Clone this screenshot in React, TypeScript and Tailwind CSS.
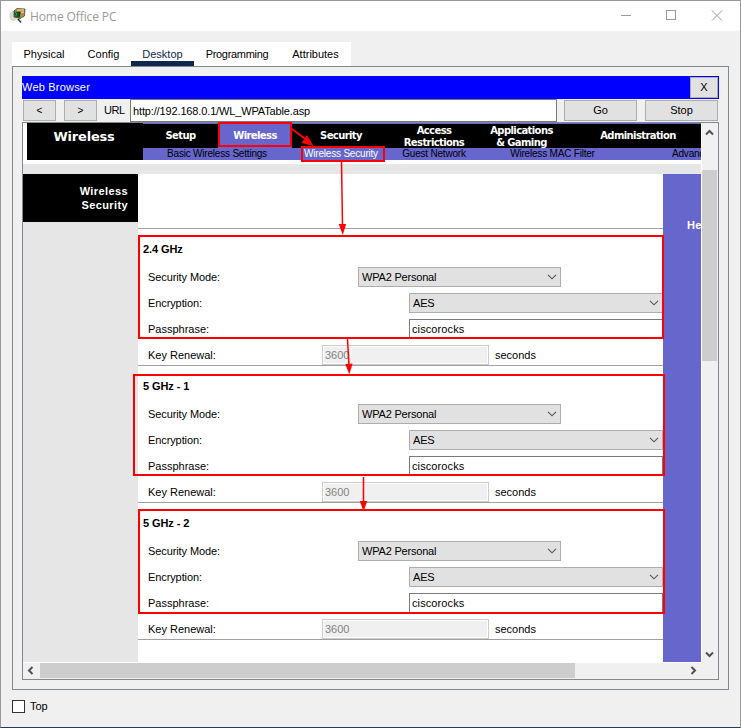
import type { ReactNode } from "react";

const tabs = [
  { label: "Physical", style: "w-16" },
  { label: "Config", style: "w-[55px]" },
  { label: "Desktop", style: "w-[63px] border-b-[5px] border-[#0d274d] text-[#0d274d] pt-[5px]" },
  { label: "Programming", style: "w-[86px] tracking-[-0.3px]" },
  { label: "Attributes", style: "w-[71px]" },
];

const menu = [
  { label: "Setup", style: "w-[75px]" },
  { label: "Wireless", style: "w-[74px] bg-[#6666cc]" },
  { label: "Security", style: "w-[98px]" },
  { label: "Access Restrictions", style: "w-[88px] px-2 pt-[2px]" },
  { label: "Applications & Gaming", style: "w-[87px] px-3 pt-[2px]" },
  { label: "Administration", style: "w-[146px]" },
];

const submenu = [
  { label: "Basic Wireless Settings", style: "w-[148px] text-center" },
  { label: "Wireless Security", style: "w-[100px] text-center text-white" },
  { label: "Guest Network", style: "w-[86px] text-center" },
  { label: "Wireless MAC Filter", style: "w-[151px] text-center" },
  { label: "Advanced Wireless Settings", style: "w-[200px] pl-11" },
];

const bands = ["2.4 GHz", "5 GHz - 1", "5 GHz - 2"];

function Button({ children, className }: { children: ReactNode; className: string }) {
  return (
    <button className={`h-[21px] shrink-0 border border-[#adadad] bg-[#e1e1e1] flex items-center justify-center ${className}`}>
      {children}
    </button>
  );
}

function Select({ value, className }: { value: string; className: string }) {
  return (
    <div className={`h-5 border border-[#adadad] bg-[#e1e1e1] flex items-center justify-between pl-[3px] pr-[3px] ${className}`}>
      <span className="tracking-[-0.2px]">{value}</span>
      <svg width="10" height="6" viewBox="0 0 10 6" fill="none" stroke="#555" strokeWidth="1.1">
        <path d="M1 .8 5 4.8 9 .8" />
      </svg>
    </div>
  );
}

function Band({ name }: { name: string }) {
  return (
    <section className="h-[137px] border-b border-[#a0a0a0] pl-[10px]">
      <h2 className="h-[35px] pt-[12px] -ml-[5px] font-bold leading-4 tracking-[-0.1px]">{name}</h2>
      <div className="flex h-[26px] items-center">
        <label className="w-[210px] tracking-[-0.1px]">Security Mode:</label>
        <Select value="WPA2 Personal" className="w-[203px]" />
      </div>
      <div className="flex h-[26px] items-center">
        <label className="w-[261px] tracking-[-0.1px]">Encryption:</label>
        <Select value="AES" className="w-[254px]" />
      </div>
      <div className="flex h-[26px] items-center">
        <label className="w-[261px]">Passphrase:</label>
        <div className="h-5 w-[254px] border border-[#7a7a7a] bg-white pl-[2px] leading-[18px] tracking-[0.1px]">ciscorocks</div>
      </div>
      <div className="flex h-[26px] items-center">
        <label className="w-[174px]">Key Renewal:</label>
        <div className="h-5 w-[167px] border border-[#ccc] bg-white p-px">
          <div className="h-4 bg-[#f0f0f0] pl-px leading-4 text-[#838383]">3600</div>
        </div>
        <span className="ml-[6px]">seconds</span>
      </div>
    </section>
  );
}

function Chevron({ className }: { className: string }) {
  return (
    <svg width="9" height="7" viewBox="0 0 9 7" fill="none" stroke="#505050" strokeWidth="2" className={className}>
      <path d="M1 5.5 4.5 2 8 5.5" />
    </svg>
  );
}

function Annotations() {
  return (
    <svg className="absolute -left-px -top-px" width="741" height="728" fill="none" stroke="#f00">
      <g strokeWidth="2">
        <rect x="219" y="123" width="72" height="23" />
        <rect x="302" y="147" width="82" height="14" />
        <rect x="139" y="236" width="524" height="102" />
        <rect x="134" y="375" width="530" height="100" />
        <rect x="139" y="510" width="525" height="103" />
        <path d="M292 129 306 139.5" />
      </g>
      <g strokeWidth="1.5">
        <path d="M341.5 162 342.5 226M347.5 339 349 366M363.5 477V503" />
      </g>
      <g fill="#f00" stroke="none">
        <path d="M313.5 146 301.500 143 307 135Z" />
        <path d="M342.700 235 338.800 224H346.200Z" />
        <path d="M349.300 374.500 345.300 364 352.600 363.500Z" />
        <path d="M363.500 511.500 359.800 501H367.200Z" />
      </g>
      {/* dark patches of the desktop along the window frame */}
      <path d="M.5 117V149M.5 696V728M740.5 84V91M740.5 103V106M740.5 500V509M740.5 515V528" stroke="#2b3a4f" />
    </svg>
  );
}

export default function App() {
  return (
    <div className="relative h-[728px] w-[741px] overflow-hidden border border-t-[#999] border-x-[#999] border-b-[#2b3a4f] bg-[#f0f0f0] font-['Liberation_Sans',Arial,sans-serif] text-[11px] leading-[13px] text-black">
      <header className="flex h-[30px] items-center bg-white pl-2">
        <svg width="18" height="18" viewBox="0 0 18 18">
          <ellipse cx="4.5" cy="9" rx="4.2" ry="5" fill="#d5d8d5" />
          <path d="M5 4 8 1.500 16 2 15.500 9 11 11.500 5 10Z" fill="#b08d4e" stroke="#3a3520" strokeWidth=".7" />
          <path d="M8 3 15 3M12 5.500 15 5" stroke="#e6c478" strokeWidth="1.300" />
          <path d="M5 4.500 11.500 5 10.500 11 5.500 9.500Z" fill="#0d5c1a" />
          <path d="M6 5 8 7 6.500 9" stroke="#3aa547" fill="none" />
          <path d="M9 5 11.500 5 10.500 11" fill="#17331b" />
          <path d="M9 12 12 15.500" stroke="#333" strokeWidth="1.500" />
          <path d="M8 12 9 13" stroke="#999" />
        </svg>
        <h1 className="ml-[3px] whitespace-nowrap font-['Open_Sans','Noto_Sans',sans-serif] text-[12px] tracking-[-0.1px] text-[#999]">Home Office PC</h1>
        <div className="ml-auto flex items-center pr-[17px]">
          <svg width="102" height="12" viewBox="0 0 102 12" fill="none" stroke="#999">
            <path d="M0 5.500H10M91 .5 101 10.500M101 .5 91 10.500" />
            <rect x="45.500" y=".5" width="9" height="9" />
          </svg>
        </div>
      </header>

      <div className="mt-[11px] ml-[11px] flex h-6 w-[339px] bg-white">
        {tabs.map((tab) => (
          <div key={tab.label} className={`flex items-center justify-center ${tab.style}`}>{tab.label}</div>
        ))}
      </div>

      <main className="ml-[11px] h-[624px] w-[717px] border border-[#828790] px-[9px] pt-[9px]">
        <div className="flex h-[23px] w-[697px] items-center justify-between bg-[#0000ff] pr-px text-white">
          <span className="tracking-[0.2px]">Web Browser</span>
          <Button className="w-7 text-black">X</Button>
        </div>
        <div className="flex h-[23px] w-[697px] items-center pl-px">
          <Button className="w-[33px] text-[10px]">&lt;</Button>
          <Button className="ml-2 w-[33px] text-[10px]">&gt;</Button>
          <span className="ml-[7px] w-[26px] tracking-[-0.5px]">URL</span>
          <div className="h-[23px] w-[427px] border border-[#7a7a7a] bg-white pl-[2px] leading-[22px] tracking-[-0.14px]">http://192.168.0.1/WL_WPATable.asp</div>
          <Button className="ml-[7px] w-[73px]">Go</Button>
          <Button className="ml-2 w-[73px]">Stop</Button>
        </div>

        <div className="flex h-[558px] w-[697px] flex-col border border-[#828790] bg-[#f0f0f0]">
          <div className="flex h-[540px]">
            <div className="h-[540px] w-[679px] overflow-hidden border-r border-b border-white bg-white">
              <div className="flex h-[37px] pl-1">
                <div className="w-[116px] shrink-0 bg-black pt-[6px] pr-[2px] text-center font-['DejaVu_Sans',Verdana,sans-serif] text-[13px] font-bold leading-4 tracking-[-0.2px] text-white">Wireless</div>
                <div className="w-[558px] shrink-0 overflow-hidden border-t border-[#6666cc] bg-[#6666cc]">
                  <nav className="flex h-6 w-[568px] bg-black font-['DejaVu_Sans',Verdana,sans-serif] text-[10px] font-bold leading-3 tracking-[-0.6px] text-white">
                    {menu.map((item) => (
                      <div key={item.label} className={`flex shrink-0 items-center justify-center text-center ${item.style}`}>{item.label}</div>
                    ))}
                  </nav>
                  <nav className="flex h-3 w-[685px] text-[10px] leading-3 tracking-[-0.2px]">
                    {submenu.map((item) => (
                      <div key={item.label} className={`shrink-0 whitespace-nowrap ${item.style}`}>{item.label}</div>
                    ))}
                  </nav>
                </div>
              </div>
              <div className="mt-1 h-[10px] bg-[#e6e6e6]" />
              <div className="flex h-[488px]">
                <aside className="w-[115px] shrink-0 bg-[#e6e6e6]">
                  <div className="h-12 bg-black pt-[10px] pr-[10px] text-right font-bold leading-[14px] tracking-[0.4px] text-white">
                    Wireless<br />Security
                  </div>
                </aside>
                <div className="w-[525px] shrink-0">
                  <div className="h-[55px] border-b border-[#a0a0a0]" />
                  {bands.map((name) => <Band key={name} name={name} />)}
                </div>
                <aside className="w-[38px] shrink-0 overflow-hidden bg-[#6666cc] pt-11 pl-6 font-bold leading-[14px] tracking-[0.4px] text-white">Help...</aside>
              </div>
            </div>
            <div className="flex w-[15px] flex-col items-center justify-between">
              <Chevron className="mt-[6px]" />
              <div className="mt-[34px] h-[191px] w-[15px] bg-[#cdcdcd]" />
              <Chevron className="mt-auto mb-[5px] rotate-180" />
            </div>
          </div>
          <div className="flex h-[15px] items-center pr-[20px]">
            <Chevron className="ml-[3px] -rotate-90" />
            <div className="ml-[5px] h-[15px] w-[535px] bg-[#cdcdcd]" />
            <Chevron className="ml-auto rotate-90" />
          </div>
        </div>
      </main>

      <label className="mt-[9px] ml-[11px] flex items-center gap-[5px]">
        <span className="h-[13px] w-[13px] border border-[#333] bg-white" />
        <span className="pt-px">Top</span>
      </label>
      <Annotations />
    </div>
  );
}
